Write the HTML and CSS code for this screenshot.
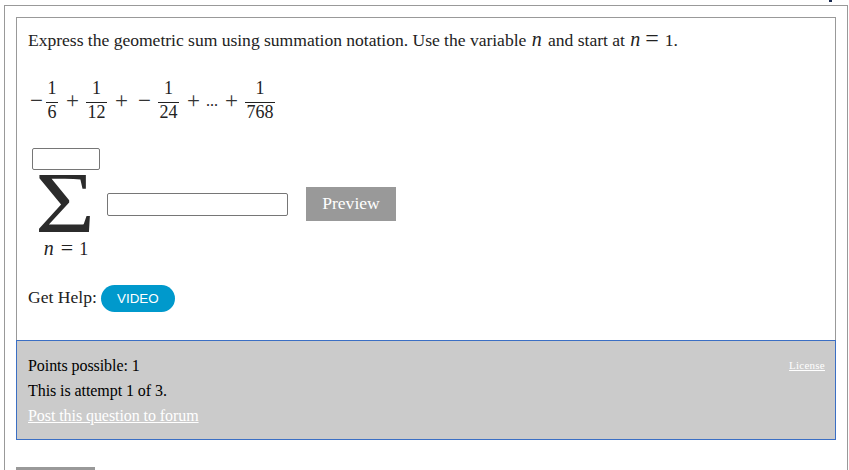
FILE: index.html
```html
<!DOCTYPE html>
<html lang="en">
<head>
<meta charset="utf-8">
<title>Question</title>
<link rel="stylesheet" href="styles.css">
</head>
<body>
<span class="corner-mark"></span>
<main class="outer">
  <section class="question">
    <div class="body">
      <p class="prompt">Express the geometric sum using summation notation. Use the variable <i class="mi">n</i> and start at <i class="mi">n</i><span class="eq">=</span>1.</p>
      <div class="series">
        <span class="op first">−</span>
        <span class="frac w12"><span class="num">1</span><span class="den">6</span></span>
        <span class="op">+</span>
        <span class="frac w21"><span class="num">1</span><span class="den">12</span></span>
        <span class="op">+</span>
        <span class="op minus">−</span>
        <span class="frac w21"><span class="num">1</span><span class="den">24</span></span>
        <span class="op">+</span>
        <span class="dots">...</span>
        <span class="op plus-end">+</span>
        <span class="frac w30"><span class="num">1</span><span class="den">768</span></span>
      </div>
      <div class="answer">
        <div class="sigma-col">
          <input class="box upper" type="text" aria-label="Upper limit">
          <span class="sigma">Σ</span>
          <span class="lower"><i class="mi">n</i><span class="eq">=</span>1</span>
        </div>
        <input class="box term" type="text" aria-label="Summand">
        <button class="preview" type="button">Preview</button>
      </div>
      <div class="help">
        <span class="help-label">Get Help:</span>
        <a class="video" href="#">VIDEO</a>
      </div>
    </div>
    <footer class="info">
      <div class="info-text">
        <p>Points possible: 1</p>
        <p>This is attempt 1 of 3.</p>
        <p><a href="#">Post this question to forum</a></p>
      </div>
      <a class="license" href="#">License</a>
    </footer>
  </section>
  <div class="submit"></div>
</main>
</body>
</html>
```
FILE: styles.css
```css
html, body {
  margin: 0;
  height: 470px;
  overflow: hidden;
  background: #fff;
}
body {
  font-family: "Liberation Serif", "Times New Roman", serif;
  font-size: 16px;
  color: #222;
  position: relative;
}
.corner-mark {
  position: absolute;
  left: 829px;
  top: 0;
  width: 3px;
  height: 2px;
  background: #1a2a50;
}
.outer {
  box-sizing: border-box;
  margin: 5px 0 0 4px;
  width: 844px;
  height: 470px;
  padding: 11px;
  border: 1px solid #999;
}
.question {
  border: 1px solid #999;
}
.body {
  height: 322px;
  box-sizing: border-box;
  padding: 11px 11px 0;
}
.prompt {
  margin: 0;
  line-height: 18px;
  font-size: 17.6px;
  letter-spacing: -0.03px;
}
.mi {
  font-style: italic;
  font-size: 20px;
  font-family: "Liberation Serif", serif;
}
.prompt .mi {
  margin: 0 2px 0 1px;
}
.prompt .eq {
  font-size: 24px;
  line-height: 18px;
  margin: 0 6px 0 3px;
}
.series {
  display: flex;
  align-items: center;
  margin-top: 28px;
  height: 47px;
  font-size: 18px;
  color: #222;
}
.frac {
  display: inline-flex;
  flex-direction: column;
  align-items: center;
  line-height: 21px;
}
.w12 { width: 12px; }
.w21 { width: 21px; }
.w30 { width: 30px; }
.num {
  margin-bottom: 3px;
}
.den {
  border-top: 1px solid #222;
  align-self: stretch;
  text-align: center;
  line-height: 19px;
  padding-bottom: 2px;
}
.op {
  margin: 0 7px 0 8px;
  font-size: 23px;
  line-height: 23px;
  color: #333;
  font-weight: 400;
}
.op.first {
  margin: 0 3px 0 2px;
}
.op.minus {
  margin: 0 7px 0 3px;
}
.op.plus-end {
  margin: 0 7px;
}
.dots {
  font-size: 16px;
  margin-left: -1px;
}
.answer {
  display: flex;
  align-items: center;
  margin-top: 24px;
}
.sigma-col {
  display: flex;
  flex-direction: column;
  align-items: center;
  width: 68px;
  margin-left: 4px;
}
.box {
  box-sizing: border-box;
  border: 1px solid #767676;
  border-radius: 2px;
  background: #fff;
  padding: 0;
}
.upper {
  width: 68px;
  height: 22px;
}
.sigma {
  font-size: 86px;
  line-height: 67px;
  height: 64px;
  margin-right: 2px;
  color: #2b2b2b;
  transform: scaleX(1.2);
}
.lower {
  font-size: 18px;
  line-height: 22px;
  margin-top: 3px;
}
.lower .mi {
  margin-right: 1px;
}
.lower .eq {
  font-size: 22px;
  line-height: 22px;
  margin: 0 6px;
}
.term {
  width: 181px;
  height: 23px;
  margin-left: 7px;
}
.preview {
  width: 90px;
  height: 34px;
  margin-left: 18px;
  background: #999;
  color: #fff;
  border: 0;
  padding: 0 0 2px;
  font: 17.6px "Liberation Serif", serif;
}
.help {
  display: flex;
  align-items: center;
  gap: 4px;
  margin-top: 25px;
  font-size: 17.6px;
}
.help-label {
  padding-bottom: 2px;
}
.video {
  display: block;
  width: 74px;
  height: 27px;
  border-radius: 14px;
  background: #0099cc;
  color: #fff;
  text-align: center;
  text-decoration: none;
  font: 13.4px/27px "Liberation Sans", Arial, sans-serif;
}
.info {
  display: flex;
  justify-content: space-between;
  box-sizing: border-box;
  height: 100px;
  padding: 12px 10px 0 11px;
  background: #cbcbcb;
  border: 1px solid #3b6fc4;
  margin: 0 -1px -1px -1px;
  color: #000;
}
.info p {
  margin: 0;
  line-height: 25px;
  letter-spacing: -0.07px;
}
.info a {
  color: #fff;
}
.license {
  font-size: 11px;
  letter-spacing: 0.25px;
  line-height: 25px;
}
.submit {
  width: 79px;
  height: 20px;
  margin-top: 27px;
  background: #999;
}
```
